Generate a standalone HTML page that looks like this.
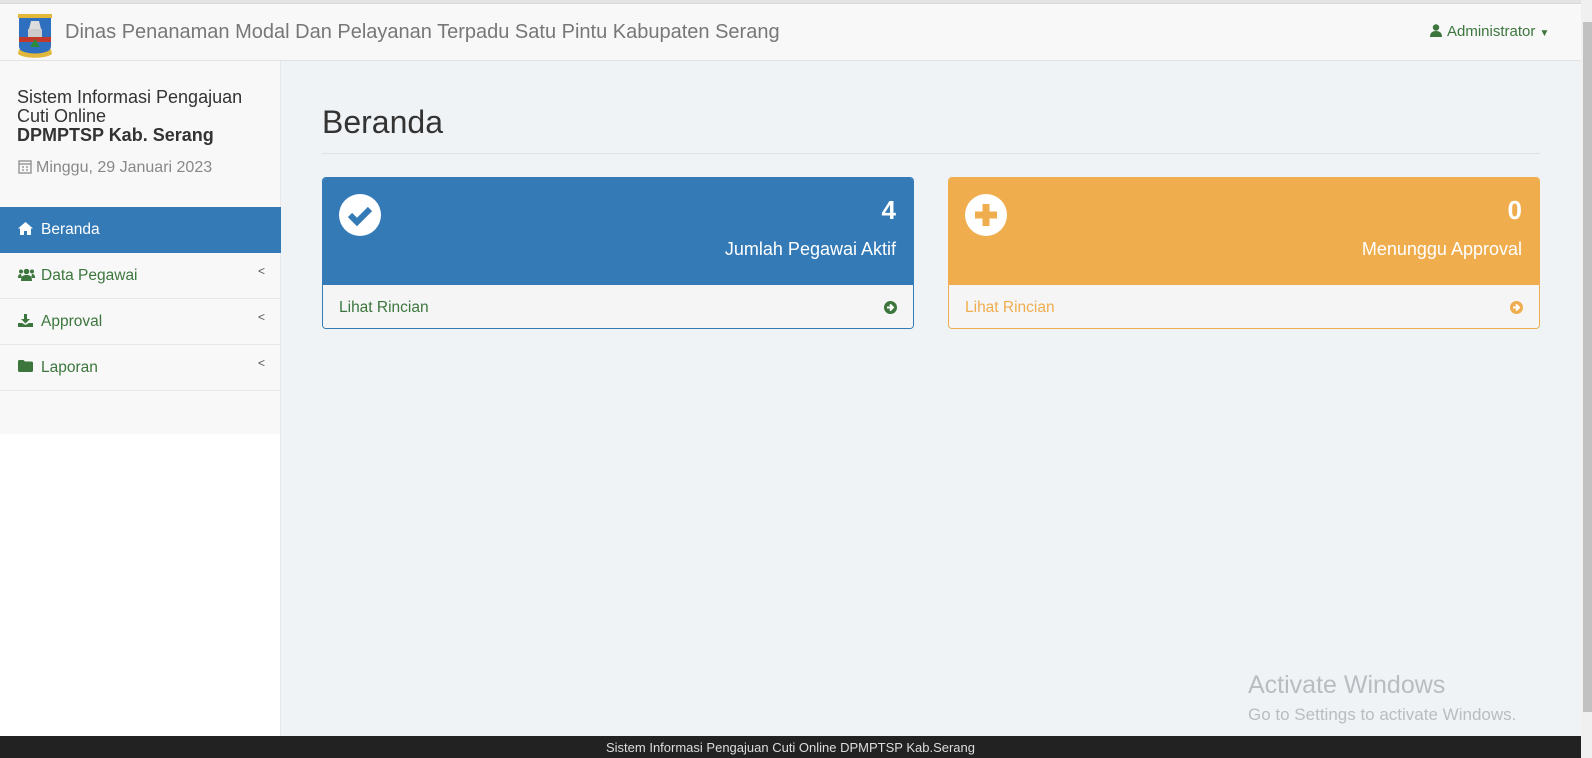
<!DOCTYPE html>
<html><head><meta charset="utf-8"><style>
*{box-sizing:border-box;margin:0;padding:0}
body{width:1592px;height:758px;overflow:hidden;background:#f0f3f6;font-family:"Liberation Sans",sans-serif;position:relative}
.topline{position:absolute;left:0;top:0;width:1581px;height:4px;background:#e4e4e4;border-bottom:1px solid #d8d8d8}
.header{position:absolute;left:0;top:4px;width:1581px;height:57px;background:#f8f8f8;border-bottom:1px solid #e2e2e2}
.title{position:absolute;left:65px;top:17px;font-size:20px;color:#777}
.admin{position:absolute;left:1430px;top:19px;font-size:15px;color:#3c763d}
.side{position:absolute;left:0;top:61px;width:281px;height:373px;background:#f8f8f8;border-right:1px solid #e7e7e7}
.sidewhite{position:absolute;left:0;top:434px;width:281px;height:302px;background:#fff;border-right:1px solid #e7e7e7}
.info{position:absolute;left:17px;top:27px;font-size:18px;color:#333;line-height:19px}
.date{position:absolute;left:18px;top:98px;font-size:16px;color:#888}
.item{position:absolute;left:0;width:281px;height:46px;border-bottom:1px solid #e7e7e7;font-size:15.5px;color:#3c763d;padding:14px 0 0 41px}
.item .ic{position:absolute;left:18px;top:15px}
.item .ch{position:absolute;left:258px;top:11px;color:#555;font-size:12px}
.item.act{background:#337ab7;color:#fff;border:none}
h1{position:absolute;left:322px;top:104px;font-size:32px;font-weight:normal;color:#333}
.hr{position:absolute;left:322px;top:153px;width:1218px;height:1px;background:#dde2e7}
.card{position:absolute;top:177px;width:592px;height:152px;border-radius:4px;overflow:hidden}
.card .hd{height:107px;position:relative;color:#fff}
.card .ft{height:45px;background:#f5f5f5;position:relative;font-size:15.5px;padding:14px 0 0 16px}
.num{position:absolute;right:17px;top:17px;font-size:26px;font-weight:bold}
.lbl{position:absolute;right:17px;top:61px;font-size:18px}
.circ{position:absolute;left:16px;top:16px}
.arr{position:absolute;right:16px;top:16px}
.footer{position:absolute;left:0;top:736px;width:1581px;height:22px;background:#222;color:#ddd;font-size:13px;text-align:center;padding-top:4px}
.sb{position:absolute;left:1581px;top:0;width:11px;height:758px;background:#f0f0f0}
.thumb{position:absolute;left:1583px;top:22px;width:9px;height:690px;background:#c1c1c1}
.wm{position:absolute;left:1248px;color:#b9bcc0}
</style></head><body>
<div class="topline"></div>
<div class="header">
<svg style="position:absolute;left:17px;top:9px" width="36" height="46" viewBox="0 0 36 46"><rect x="1" y="1" width="34" height="4" fill="#e2b83a"/><path d="M2 5h32v28c0 6-8 9-16 9s-16-3-16-9z" fill="#2f6fc0"/><path d="M2 24h32v5H2z" fill="#c0392b"/><path d="M14 8h8l2 8h-12z" fill="#ddd"/><rect x="11" y="16" width="14" height="8" fill="#ccc"/><path d="M18 26l-5 8h10z" fill="#2a8a3a"/><path d="M2 36c6 6 26 6 32 0l1 5c-6 5-28 5-34 0z" fill="#e2b83a"/></svg>
<div class="title">Dinas Penanaman Modal Dan Pelayanan Terpadu Satu Pintu Kabupaten Serang</div>
<div class="admin"><svg width="12" height="13" viewBox="0 0 12 13" style="vertical-align:-1px;margin-right:5px"><circle cx="6" cy="3.5" r="3.2" fill="#3c763d"/><path d="M0 13c0-4 2-6 6-6s6 2 6 6z" fill="#3c763d"/></svg>Administrator <span style="font-size:10px">▼</span></div>
</div>
<div class="side">
<div class="info">Sistem Informasi Pengajuan<br>Cuti Online<br><b>DPMPTSP Kab. Serang</b></div>
<div class="date"><svg width="14" height="15" viewBox="0 0 14 15" style="vertical-align:-2px;margin-right:4px"><rect x="1" y="2" width="12" height="12" fill="none" stroke="#999" stroke-width="1.5"/><path d="M1 5h12M4 8h2M8 8h2M4 11h2M8 11h2" stroke="#999" stroke-width="1.5"/></svg>Minggu, 29 Januari 2023</div>
</div>
<div class="sidewhite"></div>
<div class="item act" style="top:207px"><svg class="ic" width="15" height="13" viewBox="0 0 15 13"><path d="M7.5 0L0 6.5h2V13h4V9h3v4h4V6.5h2z" fill="#fff"/></svg>Beranda</div>
<div class="item" style="top:253px"><svg class="ic" width="17" height="13" viewBox="0 0 17 13"><circle cx="8.5" cy="3.5" r="2.8" fill="#3c763d"/><circle cx="3" cy="3.5" r="2" fill="#3c763d"/><circle cx="14" cy="3.5" r="2" fill="#3c763d"/><path d="M3 13c0-5 2-6 5.5-6S14 8 14 13z M0 10c0-3 1-4 3-4l1 4z M17 10c0-3-1-4-3-4l-1 4z" fill="#3c763d"/></svg>Data Pegawai<span class="ch">&lt;</span></div>
<div class="item" style="top:299px"><svg class="ic" width="15" height="13" viewBox="0 0 15 13"><path d="M6 0h3v5h3l-4.5 4.5L3 5h3z M0 9h4l3.5 2L11 9h4v4H0z" fill="#3c763d"/></svg>Approval<span class="ch">&lt;</span></div>
<div class="item" style="top:345px"><svg class="ic" width="15" height="12" viewBox="0 0 15 12"><path d="M0 1.5Q0 0 1.5 0h4l1.5 1.5h6.5Q15 1.5 15 3v7.5Q15 12 13.5 12h-12Q0 12 0 10.5z" fill="#3c763d"/></svg>Laporan<span class="ch">&lt;</span></div>
<h1>Beranda</h1>
<div class="hr"></div>
<div class="card" style="left:322px;border:1px solid #337ab7">
<div class="hd" style="background:#337ab7"><svg class="circ" width="42" height="42" viewBox="0 0 42 42"><circle cx="21" cy="21" r="21" fill="#fff"/><path d="M11 21l7 7 13-13" fill="none" stroke="#337ab7" stroke-width="6"/></svg><div class="num">4</div><div class="lbl">Jumlah Pegawai Aktif</div></div>
<div class="ft" style="color:#3c763d">Lihat Rincian<svg class="arr" width="13" height="13" viewBox="0 0 13 13"><circle cx="6.5" cy="6.5" r="6.5" fill="#3c763d"/><path d="M3 6.5h5M6 3.5l3 3-3 3" stroke="#fff" stroke-width="2" fill="none"/></svg></div>
</div>
<div class="card" style="left:948px;border:1px solid #f0ad4e">
<div class="hd" style="background:#f0ad4e"><svg class="circ" width="42" height="42" viewBox="0 0 42 42"><circle cx="21" cy="21" r="21" fill="#fff"/><path d="M21 10v22M10 21h22" stroke="#f0ad4e" stroke-width="7"/></svg><div class="num">0</div><div class="lbl">Menunggu Approval</div></div>
<div class="ft" style="color:#f0ad4e">Lihat Rincian<svg class="arr" width="13" height="13" viewBox="0 0 13 13"><circle cx="6.5" cy="6.5" r="6.5" fill="#f0ad4e"/><path d="M3 6.5h5M6 3.5l3 3-3 3" stroke="#fff" stroke-width="2" fill="none"/></svg></div>
</div>
<div class="wm" style="top:671px;font-size:25px">Activate Windows</div>
<div class="wm" style="top:705px;font-size:17px">Go to Settings to activate Windows.</div>
<div class="footer">Sistem Informasi Pengajuan Cuti Online DPMPTSP Kab.Serang</div>
<div class="sb"></div><div class="thumb"></div>
</body></html>
